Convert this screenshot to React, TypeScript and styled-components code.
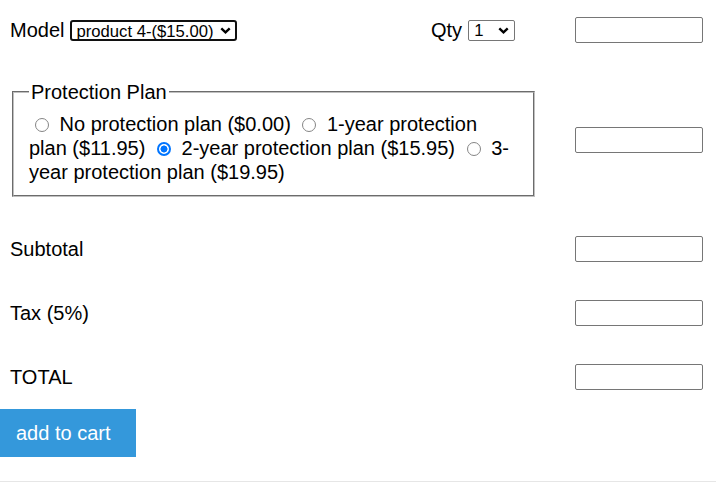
import styled, { createGlobalStyle } from 'styled-components';

const GlobalStyle = createGlobalStyle`
  html, body {
    margin: 0;
    padding: 0;
    background: #fff;
  }
  body {
    font-family: "Liberation Sans", Arial, sans-serif;
    font-size: 20px;
    color: #000;
  }
`;

const Page = styled.div`
  display: flex;
  flex-direction: column;
  width: 716px;
`;

const Form = styled.form`
  display: flex;
  flex-direction: column;
  padding: 17px 0 0 10px;
`;

const Row = styled.div<{ $height?: string; $top?: string }>`
  display: grid;
  grid-template-columns: 421px 144px 128px;
  align-items: center;
  height: ${(p) => p.$height || '26px'};
  margin-top: ${(p) => p.$top || '0'};
`;

const Label = styled.label`
  display: flex;
  align-items: center;
  font-size: 20px;
  line-height: 23px;
  white-space: nowrap;
`;

const SelectWrap = styled.span<{ $ml?: string }>`
  position: relative;
  display: inline-flex;
  margin-left: ${(p) => p.$ml || '6px'};
`;

const Select = styled.select<{ $width: string; $strong?: boolean }>`
  appearance: none;
  -webkit-appearance: none;
  box-sizing: border-box;
  width: ${(p) => p.$width};
  height: 21px;
  padding: 0 0 0 ${(p) => (p.$strong ? '4px' : '5px')};
  font-family: "Liberation Sans", Arial, sans-serif;
  font-size: 16.67px;
  color: #000;
  background: #fff;
  border: ${(p) => (p.$strong ? '2px solid #101010' : '1px solid #767676')};
  border-radius: ${(p) => (p.$strong ? '3px' : '2px')};
  outline: none;
`;

const Chevron = styled.svg`
  position: absolute;
  right: 6px;
  top: 50%;
  width: 11px;
  height: 7px;
  margin-top: -3px;
  pointer-events: none;
`;

const ArrowIcon = () => (
  <Chevron viewBox="0 0 11 7">
    <path d="M1.3 1.3 L5.5 5.3 L9.7 1.3" fill="none" stroke="#000" strokeWidth="2.4" />
  </Chevron>
);

const Field = styled.input`
  box-sizing: border-box;
  width: 128px;
  height: 26px;
  margin: 0;
  padding: 1px 2px;
  border: 1px solid #767676;
  border-radius: 2px;
  background: #fff;
  font-family: "Liberation Sans", Arial, sans-serif;
  font-size: 16.67px;
`;

const PlanCell = styled.div`
  grid-column: 1 / span 2;
  display: flex;
`;

const Fieldset = styled.fieldset`
  box-sizing: border-box;
  width: 523px;
  height: 115px;
  margin: 0 0 0 2px;
  padding: 10px 17px 12px 15px;
  border: 2px groove #c0c0c0;
  font-size: 20px;
  line-height: 24px;
`;

const Legend = styled.legend`
  padding: 0 2px;
  line-height: 20px;
  margin-left: 0;
`;

const Radio = styled.input`
  appearance: none;
  -webkit-appearance: none;
  box-sizing: border-box;
  display: inline-block;
  width: 14px;
  height: 14px;
  margin: 3px 5px 0 6px;
  vertical-align: -1px;
  border: 1px solid #858585;
  border-radius: 50%;
  background: #fff;

  &:checked {
    border: 2px solid #0075ff;
    background: radial-gradient(circle, #0075ff 0 3.2px, #fff 3.8px);
  }
`;

const AddButton = styled.button`
  align-self: flex-start;
  width: 136px;
  height: 48px;
  margin-top: 19px;
  padding: 0 0 0 16px;
  border: none;
  border-radius: 0;
  background: #3498db;
  color: #fff;
  text-align: left;
  font-family: "Liberation Sans", Arial, sans-serif;
  font-size: 20px;
  cursor: pointer;
`;

const Divider = styled.div`
  height: 1px;
  margin-top: 24px;
  background: #e6e6e6;
`;

const plans = [
  { id: 'p0', label: 'No protection plan ($0.00)' },
  { id: 'p1', label: '1-year protection plan ($11.95)' },
  { id: 'p2', label: '2-year protection plan ($15.95)', checked: true },
  { id: 'p3', label: '3-year protection plan ($19.95)' },
];

export default function App() {
  return (
    <Page>
      <GlobalStyle />
      <Form onSubmit={(e) => e.preventDefault()}>
        <Row>
          <Label>
            Model
            <SelectWrap>
              <Select $width="167px" $strong defaultValue="4">
                <option value="1">product 1-($10.00)</option>
                <option value="2">product 2-($12.00)</option>
                <option value="3">product 3-($14.00)</option>
                <option value="4">product 4-($15.00)</option>
              </Select>
              <ArrowIcon />
            </SelectWrap>
          </Label>
          <Label>
            Qty
            <SelectWrap $ml="6px">
              <Select $width="47px" defaultValue="1">
                <option value="1">1</option>
                <option value="2">2</option>
                <option value="3">3</option>
              </Select>
              <ArrowIcon />
            </SelectWrap>
          </Label>
          <Field type="text" />
        </Row>

        <Row $height="115px" $top="39px">
          <PlanCell>
            <Fieldset>
              <Legend>Protection Plan</Legend>
              {plans.map((p, i) => (
                <span key={p.id}>
                  <Radio type="radio" name="plan" id={p.id} defaultChecked={p.checked} />
                  {' '}
                  {p.label}
                  {i < plans.length - 1 ? ' ' : ''}
                </span>
              ))}
            </Fieldset>
          </PlanCell>
          <Field type="text" />
        </Row>

        <Row $top="39px">
          <Label>Subtotal</Label>
          <span />
          <Field type="text" />
        </Row>

        <Row $top="38px">
          <Label>Tax (5%)</Label>
          <span />
          <Field type="text" />
        </Row>

        <Row $top="38px">
          <Label>TOTAL</Label>
          <span />
          <Field type="text" />
        </Row>
      </Form>
      <AddButton type="button">add to cart</AddButton>
      <Divider />
    </Page>
  );
}
